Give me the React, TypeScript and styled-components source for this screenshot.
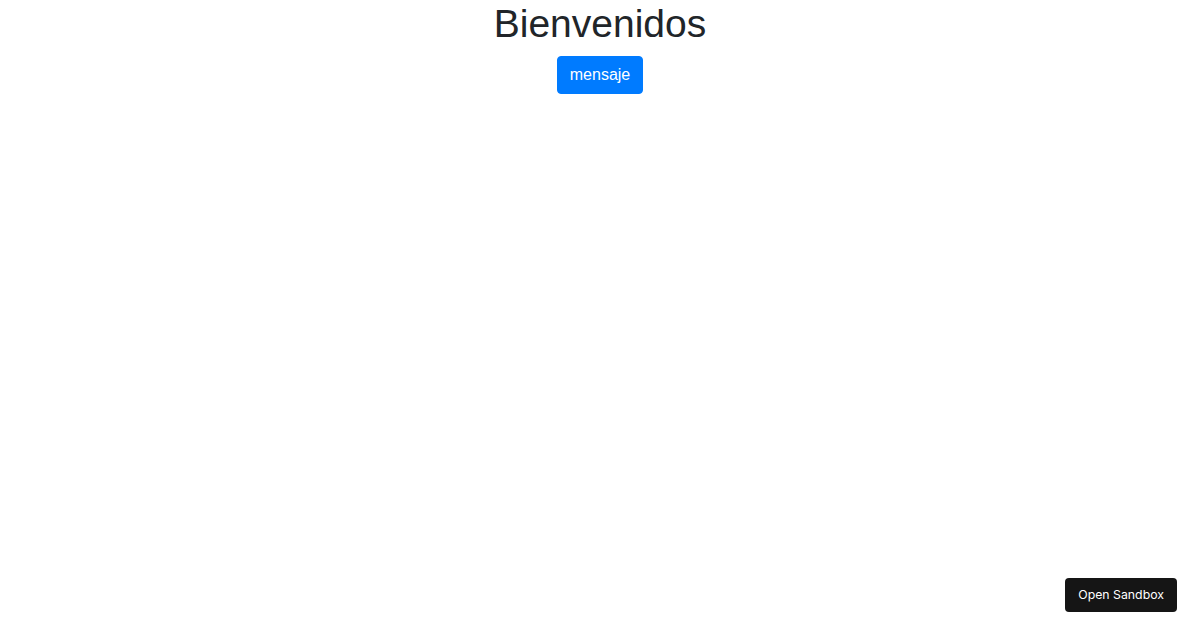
import React from 'react';
import styled, { createGlobalStyle } from 'styled-components';

const GlobalStyle = createGlobalStyle`
body {
  margin: 0;
  font-family: "Liberation Sans", Arial, sans-serif;
  font-size: 16px;
  line-height: 1.5;
  color: #212529;
  background: #fff;
}
`;

const Page = styled.div`
text-align: center;
`;

const Title = styled.h1`
margin: 0 0 8px 0;
height: 48px;
font-size: 39px;
font-weight: 400;
line-height: 48px;
color: #212529;
`;

const Button = styled.button`
display: inline-block;
padding: 6px 12px;
font-family: inherit;
font-size: 16px;
line-height: 1.5;
color: #fff;
background: #007bff;
border: 1px solid #007bff;
border-radius: 4px;
cursor: pointer;
`;

const SandboxButton = styled.a`
position: fixed;
right: 23px;
bottom: 18px;
height: 34px;
padding: 0 13px;
display: flex;
align-items: center;
font-family: Inter, "Liberation Sans", sans-serif;
font-size: 12.3px;
color: #fff;
background: #151515;
border-radius: 4px;
text-decoration: none;
`;

export default function App() {
  return (
    <Page>
      <GlobalStyle />
      <Title>Bienvenidos</Title>
      <Button>mensaje</Button>
      <SandboxButton href="#">Open Sandbox</SandboxButton>
    </Page>
  );
}
